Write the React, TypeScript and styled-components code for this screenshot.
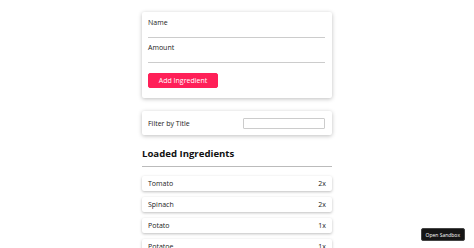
import React, { useState } from "react";
import styled, { createGlobalStyle } from "styled-components";

const GlobalStyle = createGlobalStyle`
  body {
    margin: 0;
    font-family: "Open Sans", "Liberation Sans", sans-serif;
    background: #fff;
    color: #222;
  }
`;

const ingredients = [
  { id: 1, title: "Tomato", amount: 2 },
  { id: 2, title: "Spinach", amount: 2 },
  { id: 3, title: "Potato", amount: 1 },
  { id: 4, title: "Potatoe", amount: 1 },
];

export default function App() {
  const [filter, setFilter] = useState("");
  return (
    <>
      <GlobalStyle />
      <Page>
        <Card>
          <Field>
            <Label>Name</Label>
            <LineInput type="text" />
          </Field>
          <Field>
            <Label>Amount</Label>
            <LineInput type="text" />
          </Field>
          <Actions>
            <AddButton type="button">Add Ingredient</AddButton>
          </Actions>
        </Card>
        <FilterCard>
          <FilterLabel>Filter by Title</FilterLabel>
          <FilterInput value={filter} onChange={(e) => setFilter(e.target.value)} />
        </FilterCard>
        <Section>
          <Heading>Loaded Ingredients</Heading>
          <List>
            {ingredients.map((ing) => (
              <Item key={ing.id}>
                <span>{ing.title}</span>
                <span>{ing.amount}x</span>
              </Item>
            ))}
          </List>
        </Section>
      </Page>
      <SandboxButton type="button">Open Sandbox</SandboxButton>
    </>
  );
}

const Page = styled.div`
  width: 190px;
  height: 236px;
  padding: 12px 6px 0;
  margin: 0 auto;
  overflow: hidden;
`;

const Card = styled.form`
  padding: 6px 7px 10px 6px;
  box-shadow: 0 1px 4px rgba(0, 0, 0, 0.26);
  border-radius: 2px;
  background: #fff;
`;

const Field = styled.div`
  display: flex;
  flex-direction: column;
  margin-bottom: 5px;
  &:nth-of-type(2) {
    margin-bottom: 10px;
  }
`;

const Label = styled.label`
  font-size: 7px;
  line-height: 10px;
  color: #222;
`;

const LineInput = styled.input`
  box-sizing: border-box;
  height: 10px;
  font-size: 7px;
  border: none;
  border-bottom: 1px solid #ccc;
  padding: 0;
  margin: 0;
  outline: none;
  background: transparent;
`;

const Actions = styled.div`
  display: flex;
`;

const AddButton = styled.button`
  box-sizing: border-box;
  width: 70px;
  height: 15px;
  padding: 0;
  border: 1px solid #ff2058;
  border-radius: 2px;
  background: #ff2058;
  color: #fff;
  font-family: "Open Sans", "Liberation Sans", sans-serif;
  font-size: 7px;
  cursor: pointer;
`;

const FilterCard = styled.section`
  margin-top: 13px;
  height: 24px;
  padding: 0 7px 0 6px;
  display: flex;
  align-items: center;
  justify-content: space-between;
  box-shadow: 0 1px 4px rgba(0, 0, 0, 0.26);
  border-radius: 2px;
`;

const FilterLabel = styled.label`
  font-size: 7px;
  color: #222;
`;

const FilterInput = styled.input`
  box-sizing: border-box;
  width: 82px;
  height: 11px;
  padding: 0;
  font-size: 7px;
  border: 1px solid #ccc;
  border-radius: 1px;
  outline: none;
`;

const Section = styled.section`
  margin-top: 12px;
`;

const Heading = styled.h2`
  margin: 0;
  padding-bottom: 6px;
  font-size: 9.6px;
  line-height: 13px;
  font-weight: 700;
  color: #111;
  border-bottom: 1px solid #bbb;
`;

const List = styled.ul`
  list-style: none;
  margin: 9px 0 0;
  padding: 0 0 4px;
  display: flex;
  flex-direction: column;
  gap: 6px;
`;

const Item = styled.li`
  height: 15px;
  padding: 0 6px;
  display: flex;
  align-items: center;
  justify-content: space-between;
  font-size: 7px;
  color: #222;
  box-shadow: 0 1px 3px rgba(0, 0, 0, 0.26);
  border-radius: 2px;
`;

const SandboxButton = styled.button`
  position: fixed;
  right: 9px;
  bottom: 7px;
  box-sizing: border-box;
  height: 13px;
  padding: 0 4px;
  border: 1px solid #444;
  border-radius: 2px;
  background: #151515;
  color: #fff;
  font-family: "Open Sans", "Liberation Sans", sans-serif;
  font-size: 5px;
`;
